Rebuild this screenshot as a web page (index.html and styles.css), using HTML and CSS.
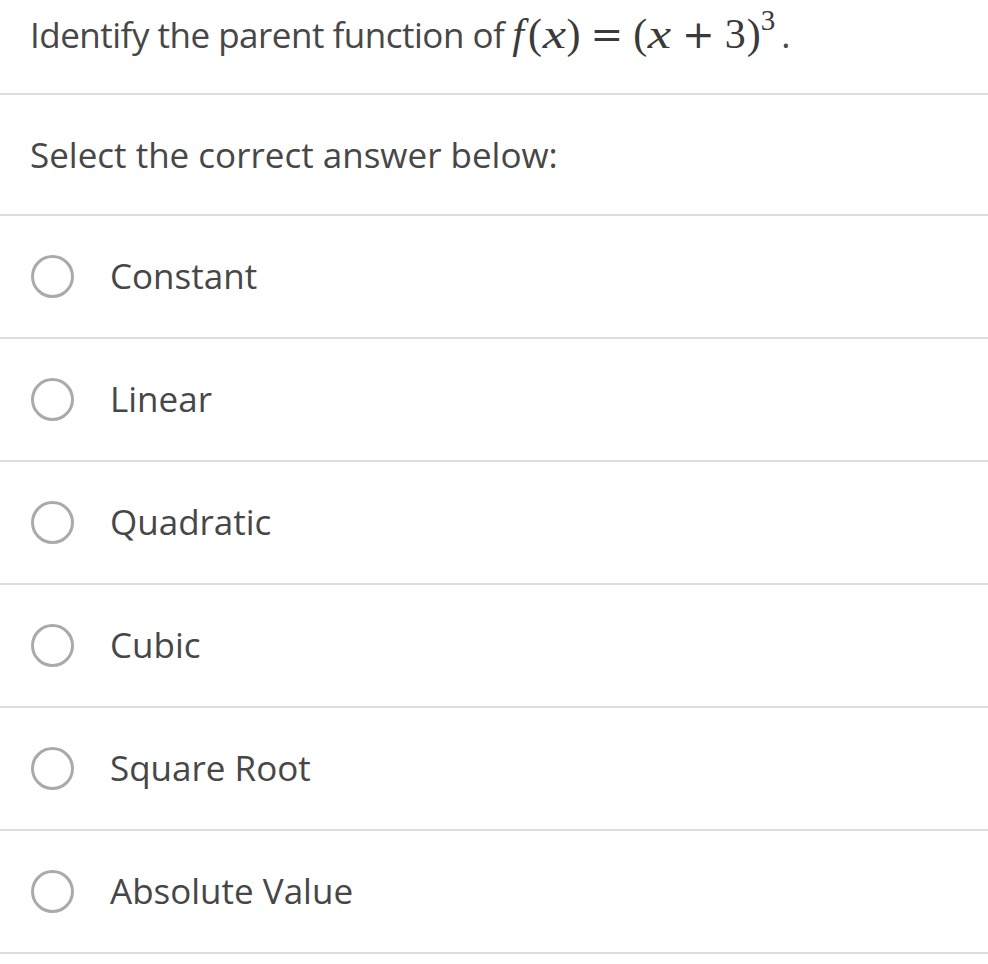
FILE: index.html
```html
<!DOCTYPE html>
<html>
<head>
<meta charset="utf-8">
<link rel="stylesheet" href="styles.css">
</head>
<body>
<div class="question">
  <div class="title"><span class="lead">Identify the parent function of</span><span class="math"><i class="mf">f</i><span class="paren">(</span><i class="mx">x</i><span class="paren">)</span><span class="op">=</span><span class="paren">(</span><i class="mx">x</i><span class="op">+</span><span class="num">3</span><span class="paren">)</span><sup>3</sup></span><span class="dot">.</span></div>
  <div class="prompt">Select the correct answer below:</div>
  <div class="option"><span class="radio"></span><span class="label">Constant</span></div>
  <div class="option"><span class="radio"></span><span class="label">Linear</span></div>
  <div class="option"><span class="radio"></span><span class="label">Quadratic</span></div>
  <div class="option"><span class="radio"></span><span class="label">Cubic</span></div>
  <div class="option"><span class="radio"></span><span class="label">Square Root</span></div>
  <div class="option"><span class="radio"></span><span class="label">Absolute Value</span></div>
</div>
</body>
</html>
```

FILE: styles.css
```css
html, body {
  margin: 0;
  padding: 0;
  background: #fff;
}
body {
  font-family: "Open Sans", sans-serif;
  color: #474747;
}
.question {
  width: 988px;
}
.title {
  box-sizing: border-box;
  height: 95px;
  padding: 10px 0 0 30px;
  font-size: 35px;
  line-height: 48px;
  border-bottom: 2px solid #ddd;
  white-space: nowrap;
}
.lead {
  letter-spacing: -0.5px;
}
.math {
  font-family: "Liberation Serif", serif;
  font-size: 42px;
  color: #3a3a3a;
  margin-left: 8px;
}
.math i {
  font-style: italic;
}
.mf {
  margin-right: 4px;
}
.mx {
  display: inline-block;
  transform: scaleX(1.25);
  margin: 0 3px;
}
.op {
  font-family: "DejaVu Serif", serif;
  font-size: 39px;
  margin: 0 10px;
}
.num {
  margin-right: 1px;
}
.math sup {
  font-size: 29px;
  vertical-align: 18px;
  line-height: 0;
}
.dot {
  margin-left: 6px;
}
.prompt {
  box-sizing: border-box;
  height: 121px;
  display: flex;
  align-items: center;
  padding-left: 30px;
  font-size: 35px;
  border-bottom: 2px solid #ddd;
}
.option {
  box-sizing: border-box;
  height: 123px;
  display: flex;
  align-items: center;
  padding-left: 31px;
  border-bottom: 2px solid #ddd;
}
.option:first-of-type {
  height: 124px;
}
.radio {
  box-sizing: border-box;
  width: 43px;
  height: 43px;
  border: 3px solid #aaa;
  border-radius: 50%;
  flex: none;
}
.label {
  margin-left: 36px;
  margin-bottom: 3px;
  font-size: 35px;
}
```
